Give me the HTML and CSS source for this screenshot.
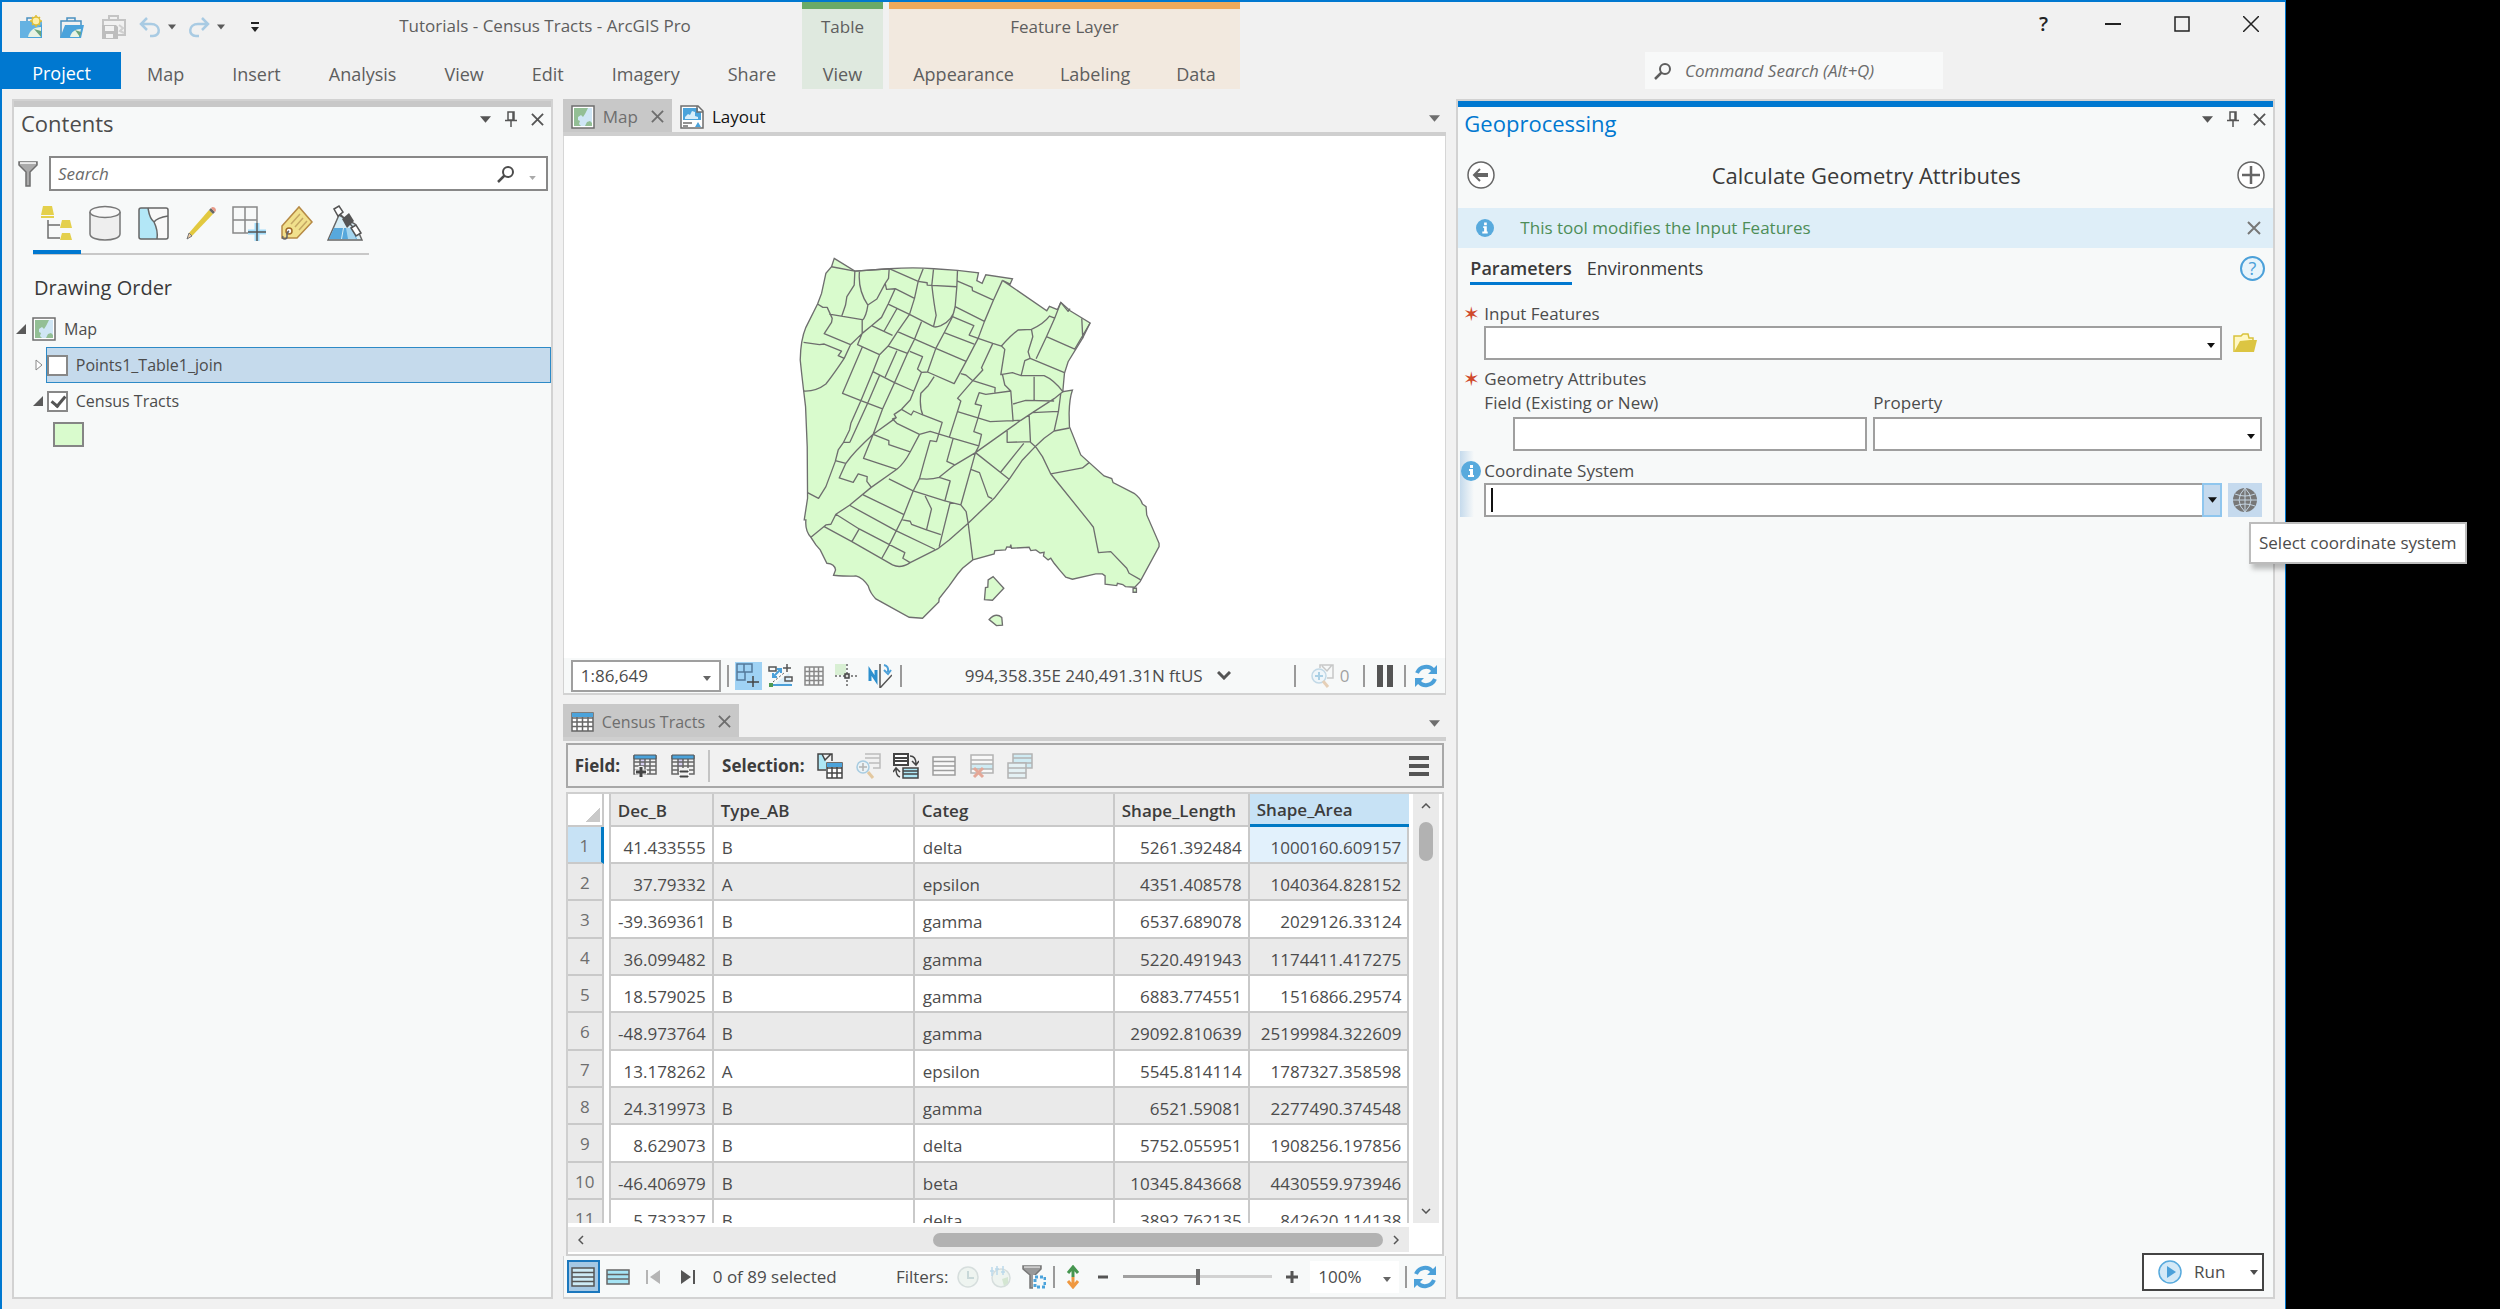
FILE: index.html
```html
<!DOCTYPE html>
<html lang="en">

<head>
    <meta charset="UTF-8">
    <meta name="viewport" content="width=device-width, initial-scale=1.0">
    <title>Tutorials - Census Tracts - ArcGIS Pro</title>
    <link rel="stylesheet" href="styles.css">
</head>

<body>
    <svg class="sprite" aria-hidden="true">
        <symbol id="close" viewBox="0 0 14 14">
            <path d="M1 1l12 12M13 1L1 13" fill="none" stroke="currentColor" stroke-width="2" />
        </symbol>
        <symbol id="caret" viewBox="0 0 10 6">
            <path d="M0 0h10L5 6z" fill="currentColor" />
        </symbol>
        <symbol id="pin" viewBox="0 0 12 16">
            <path d="M3 1h6v8H3zM0 9.500h12M6 10v6M8 1v8" fill="none" stroke="currentColor" stroke-width="1.500" />
        </symbol>
        <symbol id="search" viewBox="0 0 18 18">
            <circle cx="11" cy="7" r="5" fill="none" stroke="currentColor" stroke-width="2" />
            <path d="M7.500 10.500L1 17" stroke="currentColor" stroke-width="2.500" />
        </symbol>
        <symbol id="map" viewBox="0 0 24 24">
            <path d="M1 1h22v22H1z" fill="#fff" stroke="#6e6e6e" stroke-width="1.500" />
            <path d="M3 3h18v18H3z" fill="#cfe6f5" />
            <path d="M3 3h14l-3 6-2 3-2-2-3 2v3l2 1-1 3 2 2H3zM14 21l2-4 3-1 2 2v3z" fill="#93bf95" />
        </symbol>
        <symbol id="refresh" viewBox="0 0 24 24">
            <path d="M3 9c3-7 12-8 16-3M21 15c-3 7-12 8-16 3" fill="none" stroke="#4ba0d9" stroke-width="4" />
            <path d="M23 1v9h-9zM1 23v-9h9z" fill="#4ba0d9" />
        </symbol>
        <symbol id="info" viewBox="0 0 20 20">
            <circle cx="10" cy="10" r="10" fill="#58aadd" />
            <path d="M9 4h3v3H9zM8 8h4v6h1v2H7v-2h2v-4H8z" fill="#fff" />
        </symbol>
        <symbol id="rows" viewBox="0 0 24 20">
            <path d="M1 1h22v18H1zM1 5.500h22M1 10h22M1 14.500h22" stroke="currentColor" stroke-width="1.500" />
        </symbol>
    </svg>

    <div class="app">
        <header class="ribbon">
            <div class="ribbon-main">
                <div class="titlebar">
                    <div class="quick">
                        <button aria-label="New project"><svg width="24" height="24" viewBox="0 0 24 24">
                                <path d="M8 6V3h7v3" fill="none" stroke="#4a90c0" stroke-width="1.500" />
                                <path d="M1 6h22v17H1z" fill="#4ba3db" />
                                <path d="M1 6h22v3L8 23H1z" fill="#65b2e2" />
                                <path d="M9 22c1-6 6-10 13-10v10z" fill="#e8f3e4" />
                                <path d="M15 14l7 8v-6z" fill="#6ca57a" />
                                <circle cx="17" cy="6" r="4" fill="#fff0a8" stroke="#dfbd35" stroke-width="1.500" />
                                <path d="M17 0v2M17 10v2M11 6h2M21 6h2M13 2l1 1M20 9l1 1M21 2l-1 1M14 9l-1 1" stroke="#dfbd35" stroke-width="1.500" />
                            </svg></button>
                        <button aria-label="Open project"><svg width="26" height="24" viewBox="0 0 26 24">
                                <path d="M8 6V3h8v3M2 23V6h20v5" fill="none" stroke="#4a90c0" stroke-width="1.500" />
                                <path d="M1 23L6 10h19l-3 13z" fill="#4ba3db" />
                                <path d="M11 22c1-5 5-8 11-8l-2 8z" fill="#e8f3e4" />
                                <path d="M16 15l5 7 1-5z" fill="#6ca57a" />
                            </svg></button>
                        <button aria-label="Save project"><svg width="26" height="26" viewBox="0 0 26 26">
                                <path d="M8 6V2h9v4M2 11V6h22v15h-8" fill="none" stroke="#c4c4c4" stroke-width="2" />
                                <path d="M1 11h14l2 2v12H1z" fill="#bdbdbd" />
                                <path d="M4 12h9v5H4zM5 20h7v4H5z" fill="#f2f2f2" />
                                <path d="M18 11l4 3-3 3 4 2" fill="none" stroke="#d0d0d0" stroke-width="2" />
                            </svg></button>
                        <button class="history" aria-label="Undo"><svg width="22" height="22" viewBox="0 0 22 22">
                                <path d="M8 2L2 8l6 6M2 8h10c10 0 10 12 2 12h-3" fill="none" stroke="#a9cbe3" stroke-width="2.500" />
                            </svg><svg class="caret" width="8" height="6"><use href="#caret" /></svg></button>
                        <button class="history" aria-label="Redo"><svg width="22" height="22" viewBox="0 0 22 22">
                                <path d="M14 2l6 6-6 6M20 8H10c-10 0-10 12-2 12h3" fill="none" stroke="#a9cbe3" stroke-width="2.500" />
                            </svg><svg class="caret" width="8" height="6"><use href="#caret" /></svg></button>
                        <button class="customize" aria-label="Customize toolbar"><svg width="8" height="10" viewBox="0 0 8 10">
                                <path d="M0 1h8" stroke="#222" stroke-width="2" /><path d="M0 5h8L4 10z" fill="#222" />
                            </svg></button>
                    </div>
                    <div class="title">Tutorials - Census Tracts - ArcGIS Pro</div>
                </div>
                <nav class="tabs">
                    <button class="tab project">Project</button>
                    <button class="tab">Map</button>
                    <button class="tab">Insert</button>
                    <button class="tab">Analysis</button>
                    <button class="tab">View</button>
                    <button class="tab">Edit</button>
                    <button class="tab">Imagery</button>
                    <button class="tab">Share</button>
                </nav>
            </div>
            <div class="context table-context">
                <div class="context-name">Table</div>
                <div class="context-tabs"><button class="tab">View</button></div>
            </div>
            <div class="context feature-context">
                <div class="context-name">Feature Layer</div>
                <div class="context-tabs">
                    <button class="tab">Appearance</button>
                    <button class="tab">Labeling</button>
                    <button class="tab">Data</button>
                </div>
            </div>
            <div class="ribbon-end">
                <div class="window-buttons">
                    <button class="help-mark" aria-label="Help">?</button>
                    <button aria-label="Minimize"><svg width="16" height="16"><path d="M0 8h16" stroke="#222" stroke-width="2" /></svg></button>
                    <button aria-label="Maximize"><svg width="16" height="16"><path d="M1 1h14v14H1z" fill="none" stroke="#222" stroke-width="1.500" /></svg></button>
                    <button aria-label="Close"><svg width="16" height="16"><path d="M0 0l16 16M16 0L0 16" stroke="#222" stroke-width="1.500" /></svg></button>
                </div>
                <label class="command">
                    <svg width="18" height="18"><use href="#search" /></svg>
                    <input type="text" placeholder="Command Search (Alt+Q)" aria-label="Command Search">
                </label>
            </div>
        </header>

        <main class="workspace">
            <section class="pane contents">
                <div class="pane-head">
                    <h2>Contents</h2>
                    <div class="pane-buttons">
                        <button aria-label="Options"><svg width="11" height="7"><use href="#caret" /></svg></button>
                        <button aria-label="Pin"><svg width="12" height="16"><use href="#pin" /></svg></button>
                        <button aria-label="Close"><svg width="13" height="13"><use href="#close" /></svg></button>
                    </div>
                </div>
                <div class="search-row">
                    <button aria-label="Filter"><svg width="20" height="26" viewBox="0 0 20 26">
                            <path d="M1 1h18v3l-7 7v14H8V11L1 4z" fill="#aaa" stroke="#6e6e6e" stroke-width="1.500" />
                            <path d="M2 2h16" stroke="#fff" stroke-width="1.500" />
                        </svg></button>
                    <div class="search-box">
                        <input type="text" placeholder="Search" aria-label="Search">
                        <svg width="18" height="18"><use href="#search" /></svg>
                        <svg class="faint" width="7" height="4"><use href="#caret" /></svg>
                    </div>
                </div>
                <div class="list-modes">
                    <button class="active" aria-label="List by drawing order"><svg width="36" height="36" viewBox="0 0 36 36">
                            <path d="M9 15v18h12M9 20h12" fill="none" stroke="#6e6e6e" stroke-width="1.500" />
                            <path d="M4 1h9l2 9H2zM2 11h13v2H2zM23 15h8l2 8H21zM23 28h8l2 7H21z" fill="#e4d04c" />
                        </svg></button>
                    <button aria-label="List by source"><svg width="36" height="36" viewBox="0 0 36 36">
                            <path d="M3 7v22c0 8 30 8 30 0V7" fill="#eee" stroke="#777" stroke-width="1.500" />
                            <ellipse cx="18" cy="7" rx="15" ry="5.500" fill="#f8f8f8" stroke="#777" stroke-width="1.500" />
                        </svg></button>
                    <button aria-label="List by selection"><svg width="36" height="36" viewBox="0 0 36 36">
                            <rect x="4" y="3" width="29" height="31" rx="2" fill="#f8f8f8" />
                            <path d="M5 3h8c1 5 1 10 6 14 3 6 4 10 3 17H4V3z" fill="#b3e7f7" />
                            <path d="M13 3c1 5 1 10 6 14 3 6 4 10 3 17M19 17c3-4 8-5 14-6" fill="none" stroke="#666" stroke-width="1.500" />
                            <rect x="4" y="3" width="29" height="31" rx="2" fill="none" stroke="#666" stroke-width="1.500" />
                        </svg></button>
                    <button aria-label="List by editing"><svg width="36" height="36" viewBox="0 0 36 36">
                            <path d="M6 28L26 5l4 4L9 31z" fill="#e2c940" />
                            <path d="M6 28l3 3-5 3z" fill="#f1cfa4" stroke="#777" />
                            <path d="M26 5l2-2 4 4-2 2z" fill="#666" />
                            <path d="M28 3c2-3 7 1 4 4z" fill="#e99a88" />
                        </svg></button>
                    <button aria-label="List by snapping"><svg width="36" height="36" viewBox="0 0 36 36">
                            <path d="M2 2h24v26H2zM14 2v26M2 15h24" fill="none" stroke="#888" stroke-width="1.500" />
                            <path d="M26 18v18M17 27h18" stroke="#a2dcfa" stroke-width="5" />
                            <path d="M26 18v18M17 27h18" stroke="#555" stroke-width="1.500" />
                        </svg></button>
                    <button aria-label="List by labeling"><svg width="36" height="36" viewBox="0 0 36 36">
                            <path d="M3 21L20 2l13 15-15 16H3z" fill="#f1e08c" stroke="#b68a45" stroke-width="1.500" />
                            <path d="M12 19l9-10M16 22l8-9M20 25l8-9" stroke="#c5a864" stroke-width="1.500" />
                            <circle cx="10" cy="26" r="3" fill="#fff" stroke="#a06a2a" stroke-width="1.500" />
                            <path d="M10 26c-5 3 1 7-4 8-2 0-3-1-2-3" fill="none" stroke="#666" stroke-width="1.500" />
                        </svg></button>
                    <button aria-label="List by imagery"><svg width="36" height="36" viewBox="0 0 36 36">
                            <path d="M12 10L1 35h34l-7-16z" fill="#d7edf5" stroke="#666" stroke-width="1.500" />
                            <path d="M7 23h9l-2 11H2zM17 23h8l5 11H15z" fill="#57a8dc" />
                            <path d="M19 23h6l4 11H21z" fill="#a4d5ef" />
                            <path d="M7 4l5-3 4 6-5 4zM24 23l5-3 5 8-5 3z" fill="#fff" stroke="#555" stroke-width="1.500" />
                            <path d="M15 14l7-6 5 8-7 7z" fill="#555" />
                            <path d="M13 9l13 13" stroke="#555" stroke-width="1.500" />
                        </svg></button>
                </div>
                <h3>Drawing Order</h3>
                <ul class="tree">
                    <li class="tree-map">
                        <svg width="10" height="10"><path d="M10 0v10H0z" fill="#5a5a5a" /></svg>
                        <svg width="24" height="24"><use href="#map" /></svg>
                        <span>Map</span>
                    </li>
                    <li class="tree-layer">
                        <svg width="8" height="12"><path d="M1 1l6 5-6 5z" fill="#fff" stroke="#888" /></svg>
                        <label class="selected"><input type="checkbox">Points1_Table1_join</label>
                    </li>
                    <li class="tree-layer">
                        <svg width="10" height="10"><path d="M10 0v10H0z" fill="#5a5a5a" /></svg>
                        <label><input type="checkbox" checked>Census Tracts</label>
                    </li>
                    <li class="tree-symbol"><span class="swatch"></span></li>
                </ul>
            </section>

            <div class="center">
                <section class="view map-view">
                    <div class="view-tabs">
                        <div class="view-tab current">
                            <svg width="24" height="24"><use href="#map" /></svg>
                            <span>Map</span>
                            <button aria-label="Close map"><svg width="13" height="13"><use href="#close" /></svg></button>
                        </div>
                        <div class="view-tab">
                            <svg width="24" height="24" viewBox="0 0 24 24">
                                <path d="M1 1h17l5 5v17H1z" fill="#fff" stroke="#6e6e6e" stroke-width="1.500" />
                                <path d="M3 3h15v4h3v8H3z" fill="#4ba3db" />
                                <path d="M5 12l3-3 2 1 2-4 3 1v4l3 1v2H5z" fill="#d9eefa" />
                                <path d="M3 18h9M3 21h5M17 1v6h6" fill="none" stroke="#6e6e6e" stroke-width="1.500" />
                                <path d="M18 17l3 5h-6z" fill="#4ba3db" />
                            </svg>
                            <span>Layout</span>
                        </div>
                        <button class="view-menu" aria-label="Views"><svg width="11" height="7"><use href="#caret" /></svg></button>
                    </div>
                    <div class="map-canvas">
                        <svg viewBox="-651 -312 2646 1566" role="img" aria-label="Census tracts">
                            <path class="land" d="M160 55L222 93 325 86Q400 81 460 86L530 91 593 98 588 122 604 130 615 104 695 116 688 132 665 121 798 212 806 199 830 209 840 187 868 212 928 249 905 295 862 365 851 400 846 455 875 450Q866 475 865 520L866 560 900 645 970 708 993 716 997 728 1060 760Q1080 775 1085 792L1096 800 1098 825 1135 910V920L1078 1025 1062 1042 1034 1040 1026 1034 1010 1030 1008 1037 973 1033V1008L965 1002H945L875 1018 855 1012 838 992 820 970 810 955 802 960 788 948 790 937 778 939 765 930 750 932 745 922 692 925 690 914 688 922 678 921 674 930 642 932 640 942 576 960 545 985 530 1003 505 1038 475 1076 474 1086 425 1135 385 1132 285 1077Q268 1060 262 1038 245 1013 225 1008 205 1010 158 1006L164 990Q162 972 138 970L118 930 105 915 90 892Q72 872 75 840H70L80 775 79 620 74 500 68 450Q62 400 58 360 59 300 75 262L110 192 122 160 135 100 152 80Z" />
                            <path class="land" d="M637 1010L669 1045 635 1081 611 1079 614 1043 621 1042 622 1020Z" />
                            <path class="land" d="M625 1139Q645 1117 663 1133L665 1156 647 1157Z" />
                            <path class="land" d="M1057 1045h10v12h-10z" />
                            <path class="lines" d="M152 80L222 93 220 135 198 170 194 195 183 227M222 93L325 86M236 92Q230 150 261 195 256 230 244 241M325 86L323 115 313 130 288 177 261 195M110 192L126 202H139L154 235 152 247 130 281 209 314M145 222L244 239V280M313 130L317 148 343 146 401 175M325 86L412 124 439 128V135L528 140M427 86L412 124 401 175 386 223 350 275 322 318 296 344 276 395 240 482M458 88L453 135Q459 190 466 226L458 260M530 91L528 140 523 200Q518 240 480 257 465 263 458 260L386 223 322 192M343 146L322 192 302 232 272 257 244 280 209 314 190 355Q160 400 135 432 105 455 68 453M68 307L116 314 130 312 182 333 172 347 190 355M272 257L335 286M348 206L310 273M244 280L230 314 296 344M422 245L400 300 380 340 341 428 305 507 277 583 248 655 348 688M350 275L465 325 556 364M322 318L380 340M348 332L313 411M244 322L185 460 240 482 305 507M276 395L341 428 398 453M297 404L261 488 207 607M240 482L210 550 206 570 188 607H207M523 200L515 230 490 278 465 325 440 396 520 431 556 364 592 295M530 123L574 142 575 152 638 180M523 200L611 244M665 121L638 180 611 244 592 295 565 285 579 257 515 230M490 278L580 312M592 295L636 310 662 318Q690 285 712 270L752 268 756 290 742 335 748 355 851 398M752 268Q790 250 806 228L822 234M840 187L822 234 797 290 766 356M797 290L882 327 928 249M840 187L862 214 868 206M903 235L906 295M636 310L602 383 606 390 576 422 530 475 540 483 506 590M662 318L672 328 660 404 695 398 721 407 732 362 748 355M665 404L672 435 690 453 615 463 595 458 583 492 602 497 592 533 579 575 602 583 594 618 584 638 540 795 492 783 397 753 324 717M721 407H790Q820 420 846 455L820 476 755 518 720 541 584 638 520 676 475 712Q450 720 416 716M760 410V480M697 492L735 481 820 483M690 453L697 545M755 518L832 514M840 460L833 514 820 573 866 564M530 515L628 545 720 541M540 401L555 405 576 422 643 443 642 458M387 334L425 350 410 387 422 397 440 396M460 410L442 437 420 460Q415 500 426 525L398 513 391 525 362 508 340 523 346 533 335 537 348 550 416 583 388 636Q370 670 348 688L270 743 206 796 165 823 150 853 135 855 90 892M422 397L388 480 362 508M426 525L484 547 467 605 448 602 430 665 416 716 397 753 365 835 324 917 303 955M416 583L448 574 517 595 594 618M517 595L498 664 520 674M277 583L324 602V614L388 636M346 533L277 583Q220 635 195 670L175 714 217 727 232 702 259 710 258 724 272 743M188 607L172 630 163 665 135 740 113 775 80 758M163 662L195 670M745 525L749 605 679 607V573M820 573L790 595 766 617 725 660 685 718 640 775 562 850 505 900 470 927 388 968Q360 987 335 975L213 905 130 860M749 607L766 622 785 650 810 702 925 845 938 862 953 938 990 935 1038 985 1045 1000 1080 1020M810 702L905 684 925 668M584 638L685 718M729 610L660 696M570 688L596 698 622 770 634 776M475 712L508 723 492 783M433 768L452 807 437 870M540 795L556 815 562 850 576 960M508 788L475 920M247 765L368 823M365 840L388 844 392 853 437 870 480 884M206 796L345 872 462 928M165 823L235 867 372 938 366 955 388 968M235 867L213 905" />
                        </svg>
                    </div>
                    <div class="map-status">
                        <span class="select scale"><select aria-label="Map scale"><option>1:86,649</option></select></span>
                        <i class="sep"></i>
                        <button class="on" aria-label="Snapping"><svg width="26" height="26" viewBox="0 0 26 26">
                                <path d="M2 1h15v8H2zM2 9h8v8H2zM9 1v8" fill="none" stroke="#54799a" stroke-width="1.500" />
                                <path d="M18 13v11M12 19h12" stroke="#444" stroke-width="1.500" />
                            </svg></button>
                        <button aria-label="Dynamic constraints"><svg width="26" height="24" viewBox="0 0 26 24">
                                <path d="M9 18L21 9l2 11H8z" fill="#dceffa" />
                                <path d="M3 21h21M5 13l8-8M5 9v4h4M9 5h4v4" fill="none" stroke="#4ba0d9" stroke-width="2" />
                                <path d="M1 3h7v4H1zM17 13h7v4h-7zM15 4h8M19 0v8" fill="none" stroke="#555" stroke-width="1.500" />
                                <path d="M5 18l11-9" stroke="#555" stroke-dasharray="2 2" />
                                <path d="M1 19h4v4H1z" fill="#4e9a52" />
                            </svg></button>
                        <button aria-label="Grid"><svg width="20" height="20" viewBox="0 0 20 20">
                                <path d="M1 1h18v18H1zM5.500 1v18M10 1v18M14.500 1v18M1 5.500h18M1 10h18M1 14.500h18" fill="none" stroke="#888" stroke-width="1.500" />
                            </svg></button>
                        <button aria-label="Corrections"><svg width="24" height="24" viewBox="0 0 24 24">
                                <path d="M0 0h11v11H0z" fill="#d8efd3" />
                                <path d="M12 0v24M0 12h24" stroke="#666" stroke-width="1.500" stroke-dasharray="2 2" />
                                <path d="M10 10h4v4h-4z" fill="#ddd" stroke="#444" stroke-width="1.500" />
                            </svg></button>
                        <button aria-label="North"><svg width="24" height="24" viewBox="0 0 24 24">
                                <path d="M2 17V7l6 9V6" fill="none" stroke="#2c8fce" stroke-width="3" />
                                <path d="M12 0v24l12-13" fill="none" stroke="#555" stroke-width="1.500" />
                                <path d="M16 1q5 1 4 7M16 6l4 4 3-4" fill="none" stroke="#4ba0d9" stroke-width="2" />
                            </svg></button>
                        <i class="sep"></i>
                        <button class="coords">994,358.35E 240,491.31N ftUS
                            <svg width="14" height="9" viewBox="0 0 14 9"><path d="M1 1l6 6 6-6" fill="none" stroke="#555" stroke-width="3" /></svg>
                        </button>
                        <i class="sep"></i>
                        <button class="faded" aria-label="Selected features"><svg width="24" height="24" viewBox="0 0 24 24">
                                <path d="M10 4V1h13v13h-6M12 2l5 5 5-6" fill="none" stroke="#999" stroke-width="1.500" />
                                <circle cx="9" cy="12" r="7" fill="#e9f5fb" stroke="#8fbbd6" stroke-width="1.500" />
                                <path d="M9 8v8M5 12h8" stroke="#5fa8d3" stroke-width="2" />
                                <path d="M13 17l5 6" stroke="#d7a878" stroke-width="3" />
                            </svg>0</button>
                        <i class="sep"></i>
                        <button aria-label="Pause"><svg width="16" height="22"><path d="M3 0v22M13 0v22" stroke="#555" stroke-width="6" /></svg></button>
                        <i class="sep"></i>
                        <button aria-label="Refresh"><svg width="24" height="24"><use href="#refresh" /></svg></button>
                    </div>
                </section>

                <section class="view table-view">
                    <div class="view-tabs">
                        <div class="view-tab current">
                            <svg width="23" height="20" viewBox="0 0 23 20">
                                <path d="M1 1h21v18H1z" fill="#fff" stroke="#666" stroke-width="1.500" />
                                <path d="M1 1h21v4H1z" fill="#4ba3db" />
                                <path d="M1 6h21M1 10h21M1 14.500h21M6 5v14M11.500 5v14M17 5v14" stroke="#666" stroke-width="1.500" />
                            </svg>
                            <span>Census Tracts</span>
                            <button aria-label="Close table"><svg width="13" height="13"><use href="#close" /></svg></button>
                        </div>
                        <button class="view-menu" aria-label="Views"><svg width="11" height="7"><use href="#caret" /></svg></button>
                    </div>
                    <div class="table-tools">
                        <b>Field:</b>
                        <button aria-label="Add field"><svg width="24" height="24" viewBox="0 0 24 24">
                                <path d="M7 5h5v8H7z" fill="#d6cff0" />
                                <path d="M1 2h22v18H1zM1 8h22M1 12h22M1 16h22M7 5v15M12 5v15M17 5v15" fill="none" stroke="#666" stroke-width="1.500" />
                                <path d="M1 1h22v4H1z" fill="#4ba3db" stroke="#555" />
                                <path d="M8 12v12M2 18h12" stroke="#f1f1f1" stroke-width="5" />
                                <path d="M8 13v10M3 18h10" stroke="#444" stroke-width="3" />
                            </svg></button>
                        <button aria-label="Delete field"><svg width="24" height="24" viewBox="0 0 24 24">
                                <path d="M7 5h5v8H7z" fill="#d6cff0" />
                                <path d="M1 2h22v18H1zM1 8h22M1 12h22M1 16h22M7 5v15M12 5v15M17 5v15" fill="none" stroke="#666" stroke-width="1.500" />
                                <path d="M1 1h22v4H1z" fill="#4ba3db" stroke="#555" />
                                <path d="M8 14h10v10H8z" fill="#f1f1f1" />
                                <path d="M9 17h8v1H9zM9 22h8v1H9z" fill="#444" stroke="#444" />
                            </svg></button>
                        <i class="sep"></i>
                        <b>Selection:</b>
                        <button aria-label="Select by attributes"><svg width="26" height="26" viewBox="0 0 26 26">
                                <path d="M1 1h4l4 7v8H1z" fill="#aee7f5" />
                                <path d="M9 17H1V1h14v7M5 1l3 6 6-6" fill="none" stroke="#444" stroke-width="1.500" />
                                <path d="M10 10h15v15H10zM10 15h15M10 20h15M15 14v11M20 14v11" fill="#fff" stroke="#444" stroke-width="1.500" />
                                <path d="M10 10h15v4H10z" fill="#4ba3db" />
                            </svg></button>
                        <button class="faded" aria-label="Zoom to"><svg width="26" height="26" viewBox="0 0 26 26">
                                <path d="M10 1h15v14h-7M10 5h15M14 10h11" fill="none" stroke="#888" stroke-width="1.500" />
                                <circle cx="8" cy="14" r="6" fill="#e9f5fb" stroke="#5fa8d3" stroke-width="1.500" />
                                <path d="M8 10v8M4 14h8" stroke="#777" stroke-width="1.500" />
                                <path d="M13 19l5 6" stroke="#d7a050" stroke-width="3" />
                            </svg></button>
                        <button aria-label="Switch selection"><svg width="26" height="26" viewBox="0 0 26 26">
                                <path d="M1 1h14v11H1zM1 5h14M1 8h14" fill="#fff" stroke="#444" stroke-width="2" />
                                <path d="M10 15h15v10H10zM10 18h15M10 21h15" fill="#aee7f5" stroke="#444" stroke-width="1.500" />
                                <path d="M17 3q6 0 6 8M19 8l4 4 3-4M7 24q-4-1-4-8M0 19l3-4 4 4" fill="none" stroke="#444" stroke-width="1.500" />
                            </svg></button>
                        <button class="faded" aria-label="Select all"><svg width="24" height="22" fill="#fff"><use href="#rows" /></svg></button>
                        <button class="faded" aria-label="Clear selection"><svg width="24" height="26" viewBox="0 0 24 26">
                                <path d="M1 2h22v18H1z" fill="#fff" />
                                <path d="M1 11h22v5H1z" fill="#aee7f5" />
                                <path d="M1 2h22v18H1zM1 7h22M1 11h22M1 16h22" fill="none" stroke="#777" stroke-width="1.500" />
                                <path d="M4 15l9 9M13 15l-9 9" stroke="#d9603f" stroke-width="3" />
                            </svg></button>
                        <button class="faded" aria-label="Copy rows"><svg width="26" height="26" viewBox="0 0 26 26">
                                <path d="M6 1h19v14H6zM6 5h19M6 10h19" fill="#aee7f5" stroke="#777" stroke-width="1.500" />
                                <path d="M1 10h18v15H1zM1 15h18M1 20h18" fill="#d9f1f8" stroke="#777" stroke-width="1.500" />
                            </svg></button>
                        <button class="menu" aria-label="Menu"><svg width="20" height="20"><path d="M0 2h20M0 10h20M0 18h20" stroke="#555" stroke-width="4" /></svg></button>
                    </div>
                    <div class="table-frame">
                        <div class="table-clip">
                            <table>
                                <colgroup>
                                    <col class="c-num"><col class="c-gap"><col class="c-dec"><col class="c-type"><col class="c-cat"><col class="c-len"><col class="c-area">
                                </colgroup>
                                <thead>
                                    <tr>
                                        <th class="corner"></th>
                                        <td class="gap"></td>
                                        <th>Dec_B</th>
                                        <th>Type_AB</th>
                                        <th>Categ</th>
                                        <th>Shape_Length</th>
                                        <th class="sorted">Shape_Area</th>
                                    </tr>
                                </thead>
                                <tbody>
                                    <tr class="current-row"><th>1</th><td class="gap"></td><td class="n">41.433555</td><td>B</td><td>delta</td><td class="n">5261.392484</td><td class="n">1000160.609157</td></tr>
                                    <tr><th>2</th><td class="gap"></td><td class="n">37.79332</td><td>A</td><td>epsilon</td><td class="n">4351.408578</td><td class="n">1040364.828152</td></tr>
                                    <tr><th>3</th><td class="gap"></td><td class="n">-39.369361</td><td>B</td><td>gamma</td><td class="n">6537.689078</td><td class="n">2029126.33124</td></tr>
                                    <tr><th>4</th><td class="gap"></td><td class="n">36.099482</td><td>B</td><td>gamma</td><td class="n">5220.491943</td><td class="n">1174411.417275</td></tr>
                                    <tr><th>5</th><td class="gap"></td><td class="n">18.579025</td><td>B</td><td>gamma</td><td class="n">6883.774551</td><td class="n">1516866.29574</td></tr>
                                    <tr><th>6</th><td class="gap"></td><td class="n">-48.973764</td><td>B</td><td>gamma</td><td class="n">29092.810639</td><td class="n">25199984.322609</td></tr>
                                    <tr><th>7</th><td class="gap"></td><td class="n">13.178262</td><td>A</td><td>epsilon</td><td class="n">5545.814114</td><td class="n">1787327.358598</td></tr>
                                    <tr><th>8</th><td class="gap"></td><td class="n">24.319973</td><td>B</td><td>gamma</td><td class="n">6521.59081</td><td class="n">2277490.374548</td></tr>
                                    <tr><th>9</th><td class="gap"></td><td class="n">8.629073</td><td>B</td><td>delta</td><td class="n">5752.055951</td><td class="n">1908256.197856</td></tr>
                                    <tr><th>10</th><td class="gap"></td><td class="n">-46.406979</td><td>B</td><td>beta</td><td class="n">10345.843668</td><td class="n">4430559.973946</td></tr>
                                    <tr><th>11</th><td class="gap"></td><td class="n">5.732327</td><td>B</td><td>delta</td><td class="n">3892.762135</td><td class="n">842620.114138</td></tr>
                                </tbody>
                            </table>
                        </div>
                        <div class="scroll-y">
                            <svg width="10" height="6" viewBox="0 0 10 6"><path d="M1 5l4-4 4 4" fill="none" stroke="#555" stroke-width="1.500" /></svg>
                            <div class="thumb"></div>
                            <svg width="10" height="6" viewBox="0 0 10 6"><path d="M1 1l4 4 4-4" fill="none" stroke="#555" stroke-width="1.500" /></svg>
                        </div>
                        <div class="scroll-x">
                            <svg width="6" height="10" viewBox="0 0 6 10"><path d="M5 1L1 5l4 4" fill="none" stroke="#555" stroke-width="1.500" /></svg>
                            <div class="track"><div class="thumb"></div></div>
                            <svg width="6" height="10" viewBox="0 0 6 10"><path d="M1 1l4 4-4 4" fill="none" stroke="#555" stroke-width="1.500" /></svg>
                        </div>
                    </div>
                    <div class="table-status">
                        <button class="show-all" aria-label="Show all records"><svg width="24" height="20" fill="#cdeaf5"><use href="#rows" /></svg></button>
                        <button aria-label="Show selected records"><svg width="24" height="16" viewBox="0 0 24 16">
                                <path d="M1 1h22v14H1zM1 5.500h22M1 10h22" fill="#a6e4f4" stroke="#666" stroke-width="1.500" />
                            </svg></button>
                        <button class="step" aria-label="First record"><svg width="14" height="14"><path d="M1 0v14" stroke="#b5b5b5" stroke-width="2" /><path d="M14 0v14L4 7z" fill="#b5b5b5" /></svg></button>
                        <button class="step" aria-label="Last record"><svg width="14" height="14"><path d="M13 0v14" stroke="#555" stroke-width="2" /><path d="M0 0v14l10-7z" fill="#555" /></svg></button>
                        <span class="count">0 of 89 selected</span>
                        <span>Filters:</span>
                        <button class="filter" aria-label="Time filter"><svg width="22" height="22" viewBox="0 0 22 22">
                                <circle cx="11" cy="11" r="10" fill="#eef4f0" stroke="#d6dedd" stroke-width="1.500" /><path d="M11 5v7h6" fill="none" stroke="#c8d8d8" stroke-width="2" />
                            </svg></button>
                        <button class="filter" aria-label="Range filter"><svg width="22" height="22" viewBox="0 0 22 22">
                                <circle cx="11" cy="12" r="9" fill="#eef4f0" stroke="#d6dedd" stroke-width="1.500" /><path d="M2 1v9M7 0v9M13 0v9M0 5h4M5 3h4M11 6h4" stroke="#bcd9ea" stroke-width="1.500" /><path d="M12 13l6-2v6l-4 3z" fill="#d4e6d2" />
                            </svg></button>
                        <button class="filter" aria-label="Extent filter"><svg width="24" height="24" viewBox="0 0 24 24">
                                <path d="M1 1h18v3l-6 6v13H8V10L1 4z" fill="#999" stroke="#777" stroke-width="1.500" /><path d="M2 2h16" stroke="#fff" /><path d="M11 10h14v14H11z" fill="#f7f9f9" />
                                <path d="M13 12h10v10H13z" fill="none" stroke="#4ba3db" stroke-width="3" stroke-dasharray="3 2" />
                            </svg></button>
                        <i class="sep"></i>
                        <button aria-label="Sort"><svg width="14" height="24" viewBox="0 0 14 24">
                                <path d="M7 12V3M2 8l5-6 5 6" fill="none" stroke="#469650" stroke-width="3" /><path d="M7 12v9M2 16l5 6 5-6" fill="none" stroke="#ef9840" stroke-width="3" />
                            </svg></button>
                        <button aria-label="Zoom out"><svg width="10" height="12"><path d="M0 6h10" stroke="#555" stroke-width="3" /></svg></button>
                        <input class="slider" type="range" value="50" aria-label="Table zoom">
                        <button aria-label="Zoom in"><svg width="12" height="12"><path d="M0 6h12M6 0v12" stroke="#555" stroke-width="3" /></svg></button>
                        <span class="select percent"><select aria-label="Zoom percent"><option>100%</option></select></span>
                        <i class="sep"></i>
                        <button aria-label="Refresh"><svg width="24" height="24"><use href="#refresh" /></svg></button>
                    </div>
                </section>
            </div>

            <section class="pane geo">
                <div class="pane-head">
                    <h2>Geoprocessing</h2>
                    <div class="pane-buttons">
                        <button aria-label="Options"><svg width="11" height="7"><use href="#caret" /></svg></button>
                        <button aria-label="Pin"><svg width="12" height="16"><use href="#pin" /></svg></button>
                        <button aria-label="Close"><svg width="13" height="13"><use href="#close" /></svg></button>
                    </div>
                </div>
                <div class="tool-head">
                    <button aria-label="Back"><svg width="28" height="28" viewBox="0 0 28 28">
                            <circle cx="14" cy="14" r="13" fill="#fff" stroke="#666" stroke-width="1.500" />
                            <path d="M13 8l-6 6 6 6" fill="none" stroke="#666" stroke-width="2" />
                            <path d="M8 14h13" stroke="#666" stroke-width="4" />
                        </svg></button>
                    <h3>Calculate Geometry Attributes</h3>
                    <button aria-label="Add"><svg width="28" height="28" viewBox="0 0 28 28">
                            <circle cx="14" cy="14" r="13" fill="#fff" stroke="#666" stroke-width="1.500" />
                            <path d="M14 5v18M5 14h18" stroke="#666" stroke-width="2.500" />
                        </svg></button>
                </div>
                <div class="notice">
                    <svg width="18" height="18"><use href="#info" /></svg>
                    <span>This tool modifies the Input Features</span>
                    <button aria-label="Dismiss"><svg width="14" height="14"><use href="#close" /></svg></button>
                </div>
                <div class="tool-tabs">
                    <button class="active">Parameters</button>
                    <button>Environments</button>
                    <button class="help" aria-label="Help">?</button>
                </div>
                <form class="params">
                    <div class="param">
                        <span class="mark required">✶</span>
                        <label for="in-features">Input Features</label>
                        <div class="field">
                            <span class="select"><select id="in-features"><option></option></select></span>
                            <button type="button" class="side" aria-label="Browse"><svg width="24" height="20" viewBox="0 0 24 20">
                                    <path d="M1 19V3h7l2-2h5l1 4h4v3" fill="#fff8c4" stroke="#d9c23c" stroke-width="1.500" />
                                    <path d="M1 19L7 8l10-1h7l-3 12z" fill="#dcc542" />
                                </svg></button>
                        </div>
                    </div>
                    <div class="param attributes">
                        <span class="mark required">✶</span>
                        <span class="group-name">Geometry Attributes</span>
                        <div class="pair">
                            <label for="geo-field">Field (Existing or New)</label>
                            <label for="geo-prop">Property</label>
                            <input type="text" id="geo-field">
                            <span class="select"><select id="geo-prop"><option></option></select></span>
                        </div>
                    </div>
                    <div class="param focused">
                        <span class="mark"><svg width="20" height="20"><use href="#info" /></svg></span>
                        <label for="coord">Coordinate System</label>
                        <div class="field">
                            <span class="combo">
                                <input type="text" id="coord">
                                <button type="button" aria-label="Open list"><svg width="9" height="6"><use href="#caret" /></svg></button>
                            </span>
                            <button type="button" class="side globe" aria-label="Select coordinate system"><svg width="26" height="26" viewBox="0 0 26 26">
                                    <circle cx="13" cy="13" r="12" fill="#777" />
                                    <path d="M13 1v24M1 13h24M3 7q10 4 20 0M3 19q10-4 20 0M13 1q-12 12 0 24M13 1q12 12 0 24" fill="none" stroke="#c5d5e2" />
                                </svg></button>
                            <div class="tooltip" role="tooltip">Select coordinate system</div>
                        </div>
                    </div>
                </form>
                <div class="tool-foot">
                    <button class="run">
                        <svg width="24" height="24" viewBox="0 0 24 24"><circle cx="12" cy="12" r="11" fill="#d3e9f7" stroke="#58aadd" stroke-width="1.500" /><path d="M9 6l9 6-9 6z" fill="#4ba0d9" /></svg>
                        <span>Run</span>
                        <svg width="8" height="5"><use href="#caret" /></svg>
                    </button>
                </div>
            </section>
        </main>
    </div>
</body>

</html>
```

FILE: styles.css
```css
* {
    padding: 0;
    margin: 0;
    box-sizing: border-box;
}

body {
    background-color: #000;
    color: #4c4c4c;
    font-family: "Open Sans", "Noto Sans", sans-serif;
    font-size: 17px;
    line-height: 24px;
}

button,
input,
select {
    font: inherit;
    color: inherit;
    border: none;
    background: none;
    border-radius: 0;
    outline: none;
}

button {
    display: flex;
    align-items: center;
    justify-content: center;
    cursor: pointer;
    white-space: nowrap;
}

svg {
    display: block;
    flex: none;
}

ul {
    list-style: none;
}

.sprite {
    position: absolute;
    width: 0;
    height: 0;
}

.app {
    display: flex;
    flex-direction: column;
    height: 100vh;
    margin-right: 214px;
    background-color: #f1f1f1;
    border: 2px solid #0078d0;
    border-right-width: 1px;
    border-bottom: none;
}

/* ribbon */
.ribbon {
    display: flex;
    height: 87px;
    flex: none;
    color: #5e5e5e;
}

.ribbon-main {
    flex: 0 0 800px;
    display: flex;
    flex-direction: column;
}

.titlebar {
    flex: 1;
    display: flex;
    align-items: center;
}

.quick {
    display: flex;
    align-items: center;
    padding-left: 17px;
    gap: 16px;
    width: 286px;
}

.quick .caret {
    margin-left: 7px;
    color: #5a5a5a;
}

.quick .history {
    margin-left: -4px;
}

.quick .customize {
    margin-left: 10px;
}

.title {
    flex: 1;
    padding-bottom: 2px;
    text-align: center;
}

.tabs {
    display: flex;
    height: 37px;
}

.tab {
    padding: 6px 23px 0;
    height: 37px;
    font-size: 18px;
}

.tabs .tab {
    padding: 6px 24px 0;
}

.tabs .project {
    width: 119px;
    padding-top: 4px;
    margin-right: 2px;
    background-color: #0078d0;
    color: #fff;
}

.context {
    display: flex;
    flex-direction: column;
    justify-content: space-between;
    margin-left: 6px;
}

.context-name {
    padding-top: 6px;
    text-align: center;
}

.context-tabs {
    display: flex;
    justify-content: center;
}

.table-context {
    width: 81px;
    margin-left: 0;
    border-top: 7px solid #6aaa68;
    background-color: #dfe9df;
}

.feature-context {
    width: 351px;
    border-top: 7px solid #efaa5c;
    background-color: #f2e9df;
}

.ribbon-end {
    flex: 1;
    display: flex;
    flex-direction: column;
    justify-content: space-between;
    align-items: flex-end;
}

.window-buttons {
    display: flex;
    height: 44px;
}

.window-buttons button {
    width: 69px;
}

.window-buttons .help-mark {
    font-size: 20px;
    font-weight: 600;
    color: #222;
}

.command {
    display: flex;
    align-items: center;
    gap: 13px;
    width: 298px;
    height: 37px;
    margin-right: 342px;
    padding-left: 9px;
    background-color: #f8f9f9;
}

.command input {
    flex: 1;
    min-width: 0;
}

input::placeholder {
    font-style: italic;
    color: #6b6b6b;
    opacity: 1;
}

/* panes */
.workspace {
    flex: 1;
    min-height: 0;
    display: grid;
    grid-template-columns: 541fr 884fr 819fr;
    gap: 10px;
    padding: 10px;
}

.pane {
    display: flex;
    flex-direction: column;
    min-width: 0;
    background-color: #f7f9f9;
    border: 2px solid #d2d2d2;
}

.pane-head {
    display: flex;
    justify-content: space-between;
    height: 47px;
    padding: 0 7px;
    border-top: 6px solid #c8c8c8;
}

.pane-head h2 {
    padding-top: 1px;
    font-size: 22px;
    line-height: 30px;
    font-weight: 400;
}

.pane-buttons {
    display: flex;
    align-items: center;
    gap: 14px;
    height: 24px;
    color: #555;
}

h3 {
    font-size: 20px;
    font-weight: 400;
    color: #3a3a3a;
}

.search-row {
    display: flex;
    align-items: center;
    gap: 11px;
    margin-top: 8px;
    padding: 0 3px 0 4px;
}

.search-box {
    flex: 1;
    display: flex;
    align-items: center;
    height: 35px;
    padding: 0 10px 0 7px;
    background-color: #fff;
    border: 2px solid #888;
}

.search-box input {
    flex: 1;
    min-width: 0;
}

.search-box .faint {
    margin: 8px 0 0 14px;
    color: #aaa;
}

.list-modes {
    display: flex;
    align-self: flex-start;
    margin: 13px 0 0 19px;
    border-bottom: 2px solid #c8c8c8;
}

.list-modes button {
    width: 48px;
    height: 50px;
    padding-bottom: 12px;
    margin-bottom: -1px;
}

.list-modes .active {
    border-bottom: 4px solid #0078d0;
    padding-bottom: 8px;
}

.contents h3 {
    margin: 21px 0 0 20px;
}

.tree {
    margin-top: 11px;
    font-size: 16px;
}

.tree li {
    display: flex;
    align-items: center;
    height: 36px;
}

.tree-map {
    padding-left: 2px;
}

.tree-map svg + svg {
    margin: 0 8px 0 6px;
}

.tree .tree-layer {
    justify-content: flex-end;
    gap: 3px;
}

.tree-layer label {
    flex: 0 0 505px;
    display: flex;
    align-items: center;
    gap: 8px;
    height: 36px;
    border: 1px solid transparent;
}

.tree-layer label.selected {
    background-color: #c5daec;
    border-color: #2d8ac7;
}

.tree input {
    appearance: none;
    width: 21px;
    height: 21px;
    background-color: #fff;
    border: 2px solid #888;
}

.tree input:checked::after {
    content: "";
    display: block;
    width: 6px;
    height: 11px;
    margin: 0 0 0 5px;
    border: solid #555;
    border-width: 0 3px 3px 0;
    transform: rotate(40deg);
}

.tree .tree-symbol {
    height: 30px;
    padding-left: 39px;
}

.swatch {
    width: 31px;
    height: 25px;
    background-color: #d9fbcd;
    border: 2px solid #858585;
}

/* map and table views */
.center {
    display: flex;
    flex-direction: column;
    gap: 9px;
    min-width: 0;
    min-height: 0;
}

.view {
    display: flex;
    flex-direction: column;
}

.map-view {
    flex: 596;
    min-height: 0;
}

.table-view {
    flex: 595;
    min-height: 0;
}

.view-tabs {
    flex: none;
    display: flex;
    height: 37px;
    border-bottom: 4px solid #cfcfcf;
}

.view-tab {
    display: flex;
    align-items: center;
    gap: 8px;
    padding: 2px 8px 0;
    color: #111;
}

.view-tab.current {
    background-color: #c8c8c8;
    color: #6e6e6e;
}

.view-tab button {
    margin-left: 5px;
}

.table-view .view-tab {
    font-size: 16px;
}

.view-menu {
    margin-left: auto;
    padding: 6px 6px 0;
    color: #6e6e6e;
}

.map-canvas {
    flex: 1;
    min-height: 0;
    background-color: #fff;
    border: solid #d6d6d6;
    border-width: 0 1px;
}

.map-canvas svg {
    width: 100%;
    height: 100%;
}

.land {
    fill: #d9fbcd;
    stroke: #6e6e6e;
    stroke-width: 4;
}

.lines {
    fill: none;
    stroke: #6e6e6e;
    stroke-width: 4;
    stroke-linejoin: round;
}

.map-status {
    flex: none;
    display: flex;
    align-items: center;
    gap: 6px;
    height: 37px;
    padding: 0 6px 0 7px;
    background-color: #f7f9f9;
    border: solid #d2d2d2;
    border-width: 0 1px 2px;
}

.sep {
    flex: none;
    width: 2px;
    height: 22px;
    background-color: #9a9a9a;
}

.map-status button {
    min-width: 27px;
    height: 28px;
}

.map-status .on {
    background-color: #9fd2f4;
}

.map-status .coords {
    flex: 1;
    gap: 14px;
}

.faded {
    gap: 6px;
    padding: 0 8px;
    opacity: 0.5;
}

.select {
    position: relative;
    display: flex;
    background-color: #fff;
    border: 2px solid #9f9f9f;
}

.select select {
    appearance: none;
    flex: 1;
    min-width: 0;
    padding: 0 24px 0 8px;
}

.select::after {
    content: "";
    position: absolute;
    right: 5px;
    top: 50%;
    border: solid transparent;
    border-width: 5px 4px 0;
    border-top-color: #111;
}

.scale {
    width: 150px;
    height: 32px;
}

/* attribute table */
.table-tools {
    flex: none;
    display: flex;
    align-items: center;
    gap: 12px;
    height: 45px;
    margin: 2px 2px 4px 3px;
    padding: 0 10px 0 7px;
    border: 2px solid #a8a8a8;
}

.table-tools b {
    color: #3c3c3c;
}

.table-tools button {
    width: 26px;
    padding: 0;
}

.table-tools .sep {
    height: 32px;
    background-color: #c4c4c4;
}

.table-tools .menu {
    margin-left: auto;
}

.table-frame {
    flex: 1;
    min-height: 0;
    display: grid;
    grid-template-columns: 1fr 26px;
    grid-template-rows: 1fr 25px;
    gap: 4px;
    margin: 0 2px 0 3px;
    padding: 0 3px 2px 0;
    background-color: #fff;
    border: 2px solid #cfcfcf;
}

.table-clip {
    min-width: 0;
    min-height: 0;
    overflow: hidden;
}

table {
    width: 100%;
    table-layout: fixed;
    border-collapse: separate;
    border-spacing: 0;
}

.c-num { width: 36px; }
.c-gap { width: 7px; }
.c-dec { width: 103px; }
.c-type { width: 201px; }
.c-cat { width: 200px; }
.c-len { width: 135px; }

td,
th {
    height: 37px;
    padding: 6px 6px 0 8px;
    text-align: left;
    white-space: nowrap;
    border: solid #c9c9c9;
    border-width: 0 2px 2px 0;
}

tbody tr:nth-child(3n) td {
    height: 38px;
}

td {
    color: #4c4c4c;
}

thead th {
    height: 33px;
    padding: 2px 0 0 7px;
    font-weight: 600;
    color: #3c3c3c;
    background-color: #eaeaea;
}

tbody th {
    padding: 2px 0 0;
    text-align: center;
    font-weight: 400;
    color: #6e6e6e;
    background-color: #eaeaea;
}

tbody tr:nth-child(even) td {
    background-color: #eaeaea;
}

td.n {
    padding-left: 0;
    text-align: right;
}

td.gap,
tbody tr:nth-child(even) td.gap {
    padding: 0;
    background-color: #fff;
    border-bottom: none;
}

thead td.gap {
    height: 33px;
}

th.corner {
    background: linear-gradient(135deg, #fff 50%, #c9c9c9 50%) right 2px bottom 3px / 15px 14px no-repeat;
}

th.sorted {
    background-color: #c7e2f5;
    border-bottom: 3px solid #0079c4;
    border-right: none;
}

.current-row th {
    background-color: #c7e2f5;
    border-right: 3px solid #0079c4;
}

.current-row td:last-child {
    background-color: #e2f1fc;
}

.scroll-y,
.scroll-x {
    display: flex;
    align-items: center;
    background-color: #eaeaea;
}

.scroll-y {
    flex-direction: column;
    padding: 9px 0;
}

.scroll-y .thumb {
    width: 14px;
    height: 39px;
    margin: 13px 0 auto;
}

.scroll-x {
    padding: 0 10px;
}

.track {
    flex: 1;
    margin: 0 10px;
}

.scroll-x .thumb {
    width: 57%;
    height: 14px;
    margin-left: auto;
}

.thumb {
    border-radius: 7px;
    background-color: #b2b2b2;
}

.table-status {
    flex: none;
    display: flex;
    align-items: center;
    height: 43px;
    gap: 6px;
    padding: 0 8px 0 3px;
    background-color: #f7f9f9;
    border: solid #d2d2d2;
    border-width: 0 1px 2px;
}

.table-status button {
    min-width: 24px;
    height: 33px;
}

.table-status .show-all {
    width: 33px;
    color: #555;
    background-color: #a5c8e4;
    border: 2px solid #1b77bd;
}

.table-status .step {
    margin-left: 5px;
}

.table-status .filter {
    width: 27px;
}

.count {
    margin: 0 auto 0 7px;
}

.slider {
    appearance: none;
    width: 149px;
    height: 16px;
    margin: 0 2px;
    background: linear-gradient(to right, #a0a0a0 50%, #d2d2d2 50%) center / 100% 3px no-repeat;
}

.slider::-webkit-slider-thumb {
    appearance: none;
    width: 4px;
    height: 16px;
    background-color: #6e6e6e;
}

.percent {
    width: 89px;
    height: 32px;
    border: none;
}

.percent::after,
.scale::after {
    border-top-color: #666;
    right: 8px;
}

/* geoprocessing */
.geo .pane-head {
    padding: 0 7px 0 6px;
    border-top-color: #0078d0;
}

.geo .pane-head h2 {
    color: #0078d0;
}

.tool-head {
    display: flex;
    align-items: center;
    justify-content: space-between;
    height: 60px;
    padding: 0 8px 6px 9px;
}

.tool-head h3 {
    font-size: 22px;
}

.notice {
    display: flex;
    align-items: center;
    gap: 26px;
    height: 40px;
    padding: 0 12px 0 18px;
    color: #4d8d57;
    background-color: #deeef8;
}

.notice button {
    margin-left: auto;
    color: #777;
}

.tool-tabs {
    display: flex;
    align-items: center;
    gap: 15px;
    height: 40px;
    padding: 0 8px 0 12px;
    font-size: 18px;
    color: #3a3a3a;
}

.tool-tabs button {
    height: 34px;
}

.tool-tabs .active {
    font-weight: 600;
    border-bottom: 3px solid #0078d0;
    padding-top: 3px;
}

.tool-tabs .help {
    width: 25px;
    height: 25px;
    margin-left: auto;
    color: #4ba0d9;
    background-color: #e7f4fb;
    border: 2px solid #4ba0d9;
    border-radius: 50%;
}

.params {
    display: flex;
    flex-direction: column;
    padding-top: 14px;
}

.param {
    display: grid;
    grid-template-columns: 26px 1fr;
    padding-right: 11px;
    margin-bottom: 7px;
}

.mark {
    display: flex;
    align-items: center;
    justify-content: center;
}

.required {
    color: #d0492b;
    font-family: "DejaVu Sans", sans-serif;
    font-size: 20px;
}

.field {
    grid-column: 2;
    position: relative;
    display: flex;
    gap: 6px;
}

.field .select,
.combo {
    flex: 1;
    height: 34px;
}

.side {
    width: 34px;
    height: 34px;
}

.pair {
    grid-column: 2;
    display: grid;
    grid-template-columns: 383px 1fr;
    grid-template-rows: 26px 34px;
    column-gap: 6px;
}

.pair input {
    margin-left: 29px;
    padding: 0 8px;
    background-color: #fff;
    border: 2px solid #9f9f9f;
}

.attributes {
    margin-bottom: 0;
}

.focused {
    padding-top: 8px;
    background: linear-gradient(to right, #c5daec, #f7f9f9) 2px 0 / 14px 100% no-repeat;
}

.combo {
    display: flex;
    background-color: #fff;
    border: 2px solid #9f9f9f;
}

.combo input {
    flex: 1;
    min-width: 0;
    padding: 0 10px;
    background: linear-gradient(#111, #111) 5px center / 2px 24px no-repeat;
}

.combo button {
    width: 20px;
    margin: -2px;
    color: #111;
    background-color: #c5daee;
    border: 2px solid #8fc6ee;
}

.globe {
    background-color: #c5daee;
}

.tooltip {
    position: absolute;
    left: calc(100% - 13px);
    top: 39px;
    padding: 7px 8px;
    white-space: nowrap;
    background-color: #fff;
    border: 2px solid #bcbcbc;
    box-shadow: 3px 5px 5px rgba(0, 0, 0, 0.25);
}

.tool-foot {
    display: flex;
    justify-content: flex-end;
    margin-top: auto;
    padding: 0 9px 6px;
}

.run {
    width: 122px;
    height: 38px;
    gap: 12px;
    padding: 0 4px 0 14px;
    background-color: #fff;
    border: 2px solid #444;
}

.run svg:last-child {
    margin-left: auto;
}
```
